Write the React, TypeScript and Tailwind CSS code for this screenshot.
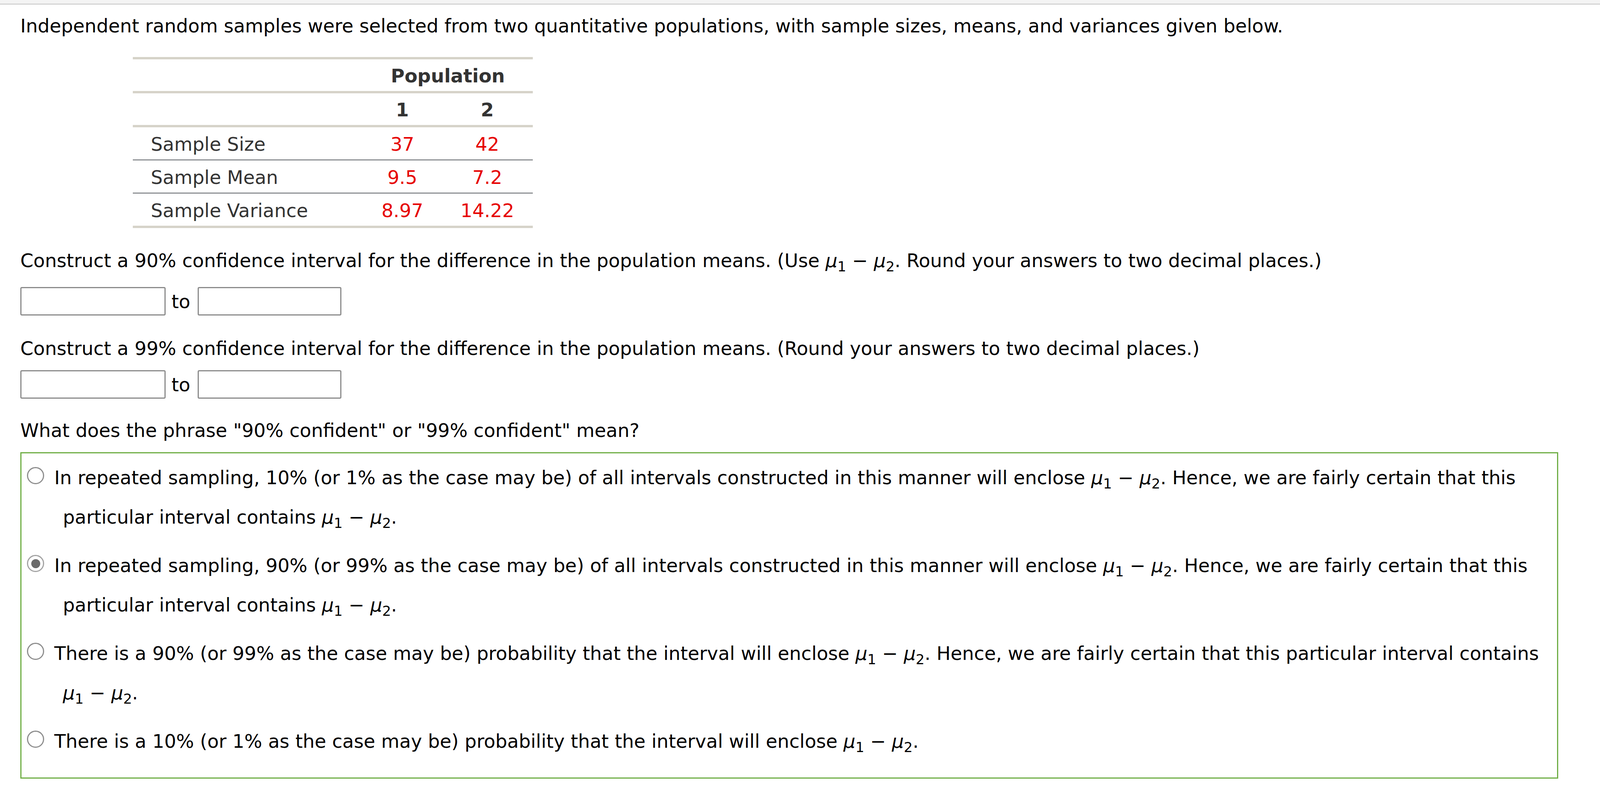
import React from 'react';

function Mu({ n }: { n: string }) {
  return (
    <>
      <span className="italic">μ</span>
      <span className="relative top-[0.32em] text-[0.74em]">{n}</span>
    </>
  );
}

function Diff() {
  return (
    <>
      <Mu n="1" /> − <Mu n="2" />
    </>
  );
}

function Radio({ checked }: { checked?: boolean }) {
  if (checked) {
    return (
      <div className="mt-[21px] flex h-[44px] w-[44px] shrink-0 items-center justify-center rounded-full border-[3.5px] border-[#a3a3a3] bg-white">
        <div className="h-[23px] w-[23px] rounded-full bg-[#6b6b6b]" />
      </div>
    );
  }
  return <div className="mt-[21px] h-[44px] w-[44px] shrink-0 rounded-full border-[3.5px] border-[#8e8e8e] bg-white" />;
}

function Option({ checked, first, second }: { checked?: boolean; first: React.ReactNode; second?: React.ReactNode }) {
  return (
    <div className="flex items-start">
      <Radio checked={checked} />
      <div className="ml-[26px] leading-[96px] whitespace-nowrap">
        <div>{first}</div>
        {second ? <div className="pl-[22px]">{second}</div> : null}
      </div>
    </div>
  );
}

function AnswerBox({ w }: { w: string }) {
  return <div className={`h-[73px] ${w} rounded-[4px] border-[3.5px] border-[#8b8b8b] bg-white`} />;
}

function AnswerPair() {
  return (
    <div className="flex items-center">
      <AnswerBox w="w-[372px]" />
      <span className="ml-[15px] mr-[19px] leading-[56px]">to</span>
      <AnswerBox w="w-[368px]" />
    </div>
  );
}

const rows = [
  ['Sample Size', '37', '42'],
  ['Sample Mean', '9.5', '7.2'],
  ['Sample Variance', '8.97', '14.22'],
];

function PopulationTable() {
  return (
    <div className="ml-[288px] mt-[52px] w-[1024px] text-[#333]">
      <div className="h-[6px] bg-[#d6d3c9]" />
      <div className="grid h-[81px] grid-cols-[589px_202px_233px] pt-[4px] leading-[77px] font-bold">
        <div className="col-span-2 col-start-2 text-center">Population</div>
      </div>
      <div className="h-[6px] bg-[#d6d3c9]" />
      <div className="grid h-[81px] grid-cols-[589px_202px_233px] pt-[4px] leading-[77px] font-bold">
        <div />
        <div className="text-center">1</div>
        <div className="text-center">2</div>
      </div>
      <div className="h-[6px] bg-[#d6d3c9]" />
      {rows.map((r, i) => (
        <div key={r[0]}>
          <div className="grid h-[82px] grid-cols-[589px_202px_233px] pt-[4px] leading-[78px]">
            <div className="pl-[46px]">{r[0]}</div>
            <div className="text-center text-[#e60000]">{r[1]}</div>
            <div className="text-center text-[#e60000]">{r[2]}</div>
          </div>
          {i < rows.length - 1 ? <div className="h-[3px] bg-[#8e9194]" /> : <div className="h-[6px] bg-[#d6d3c9]" />}
        </div>
      ))}
    </div>
  );
}

export default function App() {
  return (
    <div className="h-screen w-full overflow-hidden bg-white font-['DejaVu_Sans',sans-serif] text-[48px] text-black">
      <div className="h-[12px] border-b-[3px] border-[#d4d4d4] bg-[#f4f4f4]" />
      <div className="pl-[52px]">
        <p className="mt-[26px] leading-[56px] whitespace-nowrap">
          Independent random samples were selected from two quantitative populations, with sample sizes, means, and variances given below.
        </p>

        <PopulationTable />

        <p className="mt-[55px] leading-[56px] whitespace-nowrap">
          Construct a 90% confidence interval for the difference in the population means. (Use <Diff />. Round your answers to two decimal places.)
        </p>
        <div className="mt-[35px]">
          <AnswerPair />
        </div>

        <p className="mt-[56px] leading-[56px] whitespace-nowrap">
          Construct a 99% confidence interval for the difference in the population means. (Round your answers to two decimal places.)
        </p>
        <div className="mt-[28px]">
          <AnswerPair />
        </div>

        <p className="mt-[53px] leading-[56px] whitespace-nowrap">
          What does the phrase "90% confident" or "99% confident" mean?
        </p>

        <div className="mt-[28px] w-[3937px] border-[3.5px] border-[#6fae45] pb-[40px] pl-[14px] pt-[14px]">
          <div className="flex flex-col gap-[23px]">
            <Option
              first={<>In repeated sampling, 10% (or 1% as the case may be) of all intervals constructed in this manner will enclose <Diff />. Hence, we are fairly certain that this</>}
              second={<>particular interval contains <Diff />.</>}
            />
            <Option
              checked
              first={<>In repeated sampling, 90% (or 99% as the case may be) of all intervals constructed in this manner will enclose <Diff />. Hence, we are fairly certain that this</>}
              second={<>particular interval contains <Diff />.</>}
            />
            <Option
              first={<>There is a 90% (or 99% as the case may be) probability that the interval will enclose <Diff />. Hence, we are fairly certain that this particular interval contains</>}
              second={<><Diff />.</>}
            />
            <Option
              first={<>There is a 10% (or 1% as the case may be) probability that the interval will enclose <Diff />.</>}
            />
          </div>
        </div>
      </div>
    </div>
  );
}
